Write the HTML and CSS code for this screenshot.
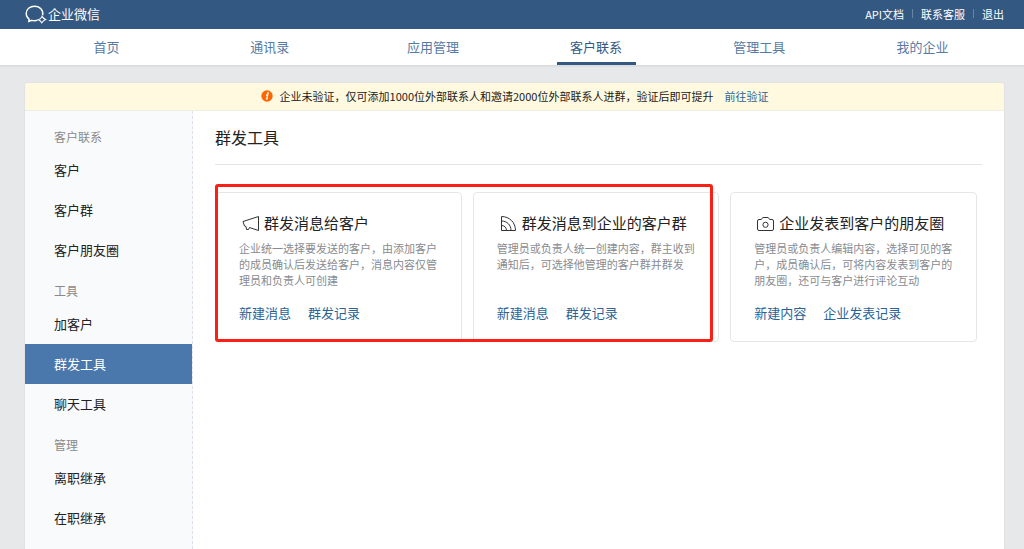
FILE: index.html
```
<!DOCTYPE html>
<html lang="zh-CN">
  <head>
    <meta charset="utf-8">
    <meta name="viewport" content="width=device-width, initial-scale=1">
    <title>企业微信</title>
    <link rel="stylesheet" href="styles.css">
  </head>
  <body>
    <header class="topbar">
      <a class="logo" href="#">
        <svg class="logo-icon" viewBox="0 0 22 20" aria-hidden="true">
          <path d="M17.6 11.4C18.8 6.4 15 2.2 9.6 2.2C4.8 2.2 1.2 5.4 1.2 9.4C1.2 11.9 2.4 13.8 4.2 15.2L3.8 17.4L6.8 16.3C8.9 16.9 11 16.8 12.6 16.2"/>
          <path class="petal" d="M17 12.4Q18.2 14.4 20.6 15.4Q18.2 16.4 16.8 18.8Q15.6 16.8 13.4 15.8Q16 14.9 17 12.4Z"/>
        </svg>
        <span>企业微信</span>
      </a>
      <div class="top-links">
        <a href="#">API文档</a>
        <i class="sep"></i>
        <a href="#">联系客服</a>
        <i class="sep"></i>
        <a href="#">退出</a>
      </div>
    </header>

    <nav class="nav">
      <a href="#">首页</a>
      <a href="#">通讯录</a>
      <a href="#">应用管理</a>
      <a href="#" class="active">客户联系</a>
      <a href="#">管理工具</a>
      <a href="#">我的企业</a>
    </nav>

    <div class="panel">
      <div class="notice">
        <svg class="notice-icon" viewBox="0 0 12 12" aria-hidden="true">
          <circle cx="6" cy="6" r="5.7" fill="#f60"/>
          <circle cx="6.9" cy="3" r="1" fill="#fff"/>
          <path d="M5 5.2L6.7 4.9L5.7 8.8L6.8 8.5" fill="none" stroke="#fff" stroke-width="1.3"/>
        </svg>
        <span>企业未验证，仅可添加1000位外部联系人和邀请2000位外部联系人进群，验证后即可提升</span>
        <a href="#">前往验证</a>
      </div>

      <div class="body">
        <aside class="sidebar">
          <h3>客户联系</h3>
          <a href="#">客户</a>
          <a href="#">客户群</a>
          <a href="#">客户朋友圈</a>
          <h3>工具</h3>
          <a href="#">加客户</a>
          <a href="#" class="active">群发工具</a>
          <a href="#">聊天工具</a>
          <h3>管理</h3>
          <a href="#">离职继承</a>
          <a href="#">在职继承</a>
        </aside>

        <main class="main">
          <h1>群发工具</h1>
          <div class="cards">
            <section class="card">
              <h2>
                <svg class="card-icon" viewBox="0 0 22 18" aria-hidden="true">
                  <path d="M19.5 2.5V16.5L10.5 13.5L9.5 15.5H7.5L7 12.5L5.5 12L4 7.5Z"/>
                </svg>
                群发消息给客户
              </h2>
              <p>企业统一选择要发送的客户，由添加客户的成员确认后发送给客户，消息内容仅管理员和负责人可创建</p>
              <div class="card-links">
                <a href="#">新建消息</a>
                <a href="#">群发记录</a>
              </div>
            </section>

            <section class="card">
              <h2>
                <svg class="card-icon" viewBox="0 0 22 18" aria-hidden="true">
                  <path d="M4.5 2.5C12.5 2.5 18.5 8.5 18.5 16.5H4.5Z"/>
                  <path d="M4.5 7C10 7 14 11 14 16.5M4.5 11.5C7.5 11.5 9.5 13.5 9.5 16.5"/>
                </svg>
                群发消息到企业的客户群
              </h2>
              <p>管理员或负责人统一创建内容，群主收到通知后，可选择他管理的客户群并群发</p>
              <div class="card-links">
                <a href="#">新建消息</a>
                <a href="#">群发记录</a>
              </div>
            </section>

            <section class="card">
              <h2>
                <svg class="card-icon" viewBox="0 0 22 18" aria-hidden="true">
                  <path d="M5 5.5H7.3L8.8 3.5H14.2L15.7 5.5H18Q19.5 5.5 19.5 7V15Q19.5 16.5 18 16.5H5Q3.5 16.5 3.5 15V7Q3.5 5.5 5 5.5Z"/>
                  <circle cx="11.5" cy="10.8" r="2.6"/>
                </svg>
                企业发表到客户的朋友圈
              </h2>
              <p>管理员或负责人编辑内容，选择可见的客户，成员确认后，可将内容发表到客户的朋友圈，还可与客户进行评论互动</p>
              <div class="card-links">
                <a href="#">新建内容</a>
                <a href="#">企业发表记录</a>
              </div>
            </section>

            <div class="highlight"></div>
          </div>
        </main>
      </div>
    </div>
  </body>
</html>
```
FILE: styles.css
```
* {
  box-sizing: border-box;
}
body {
  margin: 0;
  background: #e7e8ea;
  color: #222;
  font: 13px/20px "Noto Sans CJK SC", sans-serif;
}
a {
  color: #2a6496;
  text-decoration: none;
}
h1, h2, h3, p {
  margin: 0;
  font-weight: normal;
}

/* top bar */
.topbar {
  display: flex;
  justify-content: space-between;
  align-items: center;
  height: 29px;
  padding: 0 20px 2px 25px;
  background: #335982;
}
.logo, .top-links {
  display: flex;
  align-items: center;
}
.logo {
  gap: 1px;
  color: #fff;
}
.logo-icon {
  width: 22px;
  height: 20px;
  fill: none;
  stroke: #fff;
  stroke-width: 1.4;
}
.logo-icon .petal {
  stroke-width: 1.1;
}
.top-links {
  gap: 8px;
  font-size: 11px;
}
.top-links a {
  color: #fff;
}
.sep {
  width: 1px;
  height: 9px;
  background: #6785a5;
}

/* main nav */
.nav {
  display: grid;
  grid-template-columns: repeat(6, 1fr);
  justify-items: center;
  padding: 0 20px 0 25px;
  background: #fff;
  border-bottom: 1px solid #d9dbdd;
  box-shadow: 0 1px 1px #dddfe1;
}
.nav a {
  min-width: 79px;
  height: 36px;
  line-height: 36px;
  text-align: center;
  color: #577aa3;
}
.nav .active {
  color: #335982;
  box-shadow: inset 0 -3px #335982;
}

/* content panel */
.panel {
  display: flex;
  flex-direction: column;
  min-height: calc(100vh - 83px);
  margin: 17px 20px 0 25px;
  background: #fff;
  border-radius: 3px 3px 0 0;
  box-shadow: 0 0 2px #cfd1d4;
  overflow: hidden;
}
.notice {
  display: flex;
  justify-content: center;
  align-items: center;
  height: 28px;
  padding-bottom: 1px;
  font-size: 11px;
  background: #fff9e0;
  border-bottom: 1px solid #efeee4;
}
.notice-icon {
  width: 12px;
  height: 12px;
  margin-right: 7px;
}
.notice a {
  margin-left: 11px;
}
.body {
  display: flex;
  flex: 1;
}

/* sidebar */
.sidebar {
  flex: none;
  width: 168px;
  padding-top: 5px;
  background: #f9fafc;
  border-right: 1px dashed #dde2ea;
}
.sidebar h3 {
  padding: 8px 0 0 29px;
  font-size: 12px;
  line-height: 26px;
  color: #8a8a8a;
}
.sidebar a {
  display: block;
  padding-left: 29px;
  line-height: 40px;
  color: #222;
}
.sidebar .active {
  color: #fff;
  background: #4a78ad;
}

/* page */
.main {
  flex: 1;
  padding: 0 22px;
}
.main h1 {
  height: 54px;
  font-size: 16px;
  line-height: 53px;
  border-bottom: 1px solid #e2e4e8;
}
.cards {
  position: relative;
  display: grid;
  grid-template-columns: repeat(3, 1fr);
  gap: 11px;
  margin: 27px 5px 0 0;
}
.card {
  display: flex;
  flex-direction: column;
  padding: 18px 16px 18px 23px;
  border: 1px solid #e4e6e9;
  border-radius: 4px;
}
.card h2 {
  display: flex;
  align-items: center;
  gap: 3px;
  font-size: 15px;
  line-height: 24px;
  white-space: nowrap;
}
.card-icon {
  flex: none;
  width: 22px;
  height: 18px;
  fill: none;
  stroke: #333;
}
.card p {
  margin: 5px 0 15px;
  font-size: 11px;
  line-height: 16px;
  color: #888b90;
}
.card-links {
  display: flex;
  gap: 17px;
  margin-top: auto;
}

/* red frame around the first two cards */
.highlight {
  position: absolute;
  top: -8px;
  bottom: 0;
  left: 0;
  right: calc(100% / 3 + 10px);
  border: 3px solid #fb2016;
  border-radius: 3px;
  pointer-events: none;
}
```
